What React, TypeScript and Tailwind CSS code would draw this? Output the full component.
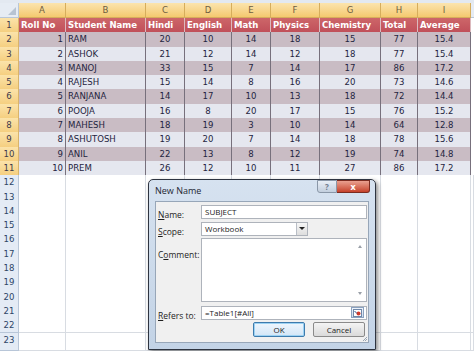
import React from "react";

const COLS = "grid grid-cols-[19px_47px_80px_39px_47px_39px_49px_61px_37px_53px_1fr]";
const LETTERS = ["A", "B", "C", "D", "E", "F", "G", "H", "I"];
const HEAD = ["Roll No", "Student Name", "Hindi", "English", "Math", "Physics", "Chemistry", "Total", "Average"];

const DATA: [number, string, number, number, number, number, number, number, string][] = [
  [1, "RAM", 20, 10, 14, 18, 15, 77, "15.4"],
  [2, "ASHOK", 21, 12, 14, 12, 18, 77, "15.4"],
  [3, "MANOJ", 33, 15, 7, 14, 17, 86, "17.2"],
  [4, "RAJESH", 15, 14, 8, 16, 20, 73, "14.6"],
  [5, "RANJANA", 14, 17, 10, 13, 18, 72, "14.4"],
  [6, "POOJA", 16, 8, 20, 17, 15, 76, "15.2"],
  [7, "MAHESH", 18, 19, 3, 10, 14, 64, "12.8"],
  [8, "ASHUTOSH", 19, 20, 7, 14, 18, 78, "15.6"],
  [9, "ANIL", 22, 13, 8, 12, 19, 74, "14.8"],
  [10, "PREM", 26, 12, 10, 11, 27, 86, "17.2"],
];

const cellFont = { fontFamily: "'DejaVu Sans Condensed', 'DejaVu Sans', sans-serif" };
const uiFont = { fontFamily: "'Open Sans', 'Noto Sans', sans-serif" };

function RowHead({ n, active }: { n?: number; active: boolean }) {
  return (
    <div
      className={`flex items-center justify-center border-r border-b text-[9.5px] ${
        active
          ? "bg-gradient-to-b from-[#fbe3aa] to-[#f5cf80] border-[#d9b46a] text-[#3e3a4a]"
          : "bg-[#e4ebf5] border-[#b8c6d8] text-[#2d4566]"
      }`}
    >
      {n}
    </div>
  );
}

function BlankRow({ n, h }: { n?: number; h: string }) {
  return (
    <div className={`${COLS} ${h}`}>
      <RowHead n={n} active={false} />
      {Array.from({ length: 10 }, (_, j) => (
        <div key={j} className="bg-white border-r border-b border-[#d8dce2]" />
      ))}
    </div>
  );
}

function Sheet() {
  return (
    <div style={cellFont} className="flex h-full flex-col">
      <div className="h-[3px] bg-[#e3e9f1]" />
      <div className={`${COLS} h-[15px]`}>
        <div className="relative bg-[#e6ecf4] border-r border-b border-[#b8c6d8]">
          <div className="absolute right-[2px] bottom-[2px] w-0 h-0 border-l-[8px] border-l-transparent border-b-[8px] border-b-[#b7c3d2]" />
        </div>
        {LETTERS.map((l) => (
          <div
            key={l}
            className="flex items-center justify-center bg-gradient-to-b from-[#fbe4ae] to-[#f4c96e] border-r border-b border-[#d6ad5c] text-[9.5px] text-[#6d5c3f]"
          >
            {l}
          </div>
        ))}
        <div className="bg-[#e6ecf4] border-b border-[#b8c6d8]" />
      </div>

      <div className={`${COLS} h-[14.3px]`}>
        <RowHead n={1} active />
        {HEAD.map((h) => (
          <div
            key={h}
            className="flex items-center px-[2px] bg-gradient-to-b from-[#cd6669] to-[#c0505a] border-r border-[#dcb9bd] border-b border-b-[#8d5058] text-[9.5px] font-bold text-white whitespace-nowrap overflow-hidden"
          >
            {h}
          </div>
        ))}
        <div className="bg-white border-b border-[#dadfe5]" />
      </div>

      {DATA.map((r, i) => {
        const band = i % 2 === 0 ? "bg-[#c9bcc4]" : "bg-[#e5e7ef]";
        const cell = `flex items-center border-r border-b border-[#77707c] text-[9.5px] text-[#1f2440] ${band}`;
        return (
          <div key={r[0]} className={`${COLS} h-[14.3px]`}>
            <RowHead n={i + 2} active />
            <div className={`${cell} justify-end pr-[2px]`}>{r[0]}</div>
            <div className={`${cell} pl-[2px]`}>{r[1]}</div>
            {r.slice(2).map((v, j) => (
              <div key={j} className={`${cell} justify-center`}>
                {v}
              </div>
            ))}
            <div className="bg-white border-b border-[#dadfe5]" />
          </div>
        );
      })}

      {Array.from({ length: 12 }, (_, i) => (
        <BlankRow key={i} n={i + 12} h="h-[14.3px]" />
      ))}
      <BlankRow h="flex-1" />
    </div>
  );
}

function Label({ pre, u, post }: { pre?: string; u: string; post: string }) {
  return (
    <span className="text-[8.5px] text-[#1e1e1e] whitespace-nowrap">
      {pre}
      <span className="underline">{u}</span>
      {post}
    </span>
  );
}

function Dialog() {
  return (
    <div
      style={uiFont}
      className="absolute left-[148px] top-[179px] w-[228px] h-[171px] rounded-t-[5px] border border-[#2e3440] bg-gradient-to-b from-[#d6e2f0] to-[#c3d3e6] shadow-[2px_2px_4px_rgba(0,0,0,0.45)]"
    >
      <div className="flex h-[21px] items-start">
        <span className="ml-[6px] mt-[4px] text-[9px] text-[#1d2633]">New Name</span>
        <div className="ml-auto mr-[5px] flex">
          <div className="flex h-[13px] w-[20px] items-center justify-center rounded-bl-[3px] border border-[#8a97a8] bg-gradient-to-b from-[#e8eef6] to-[#c3cfde] text-[8px] font-bold text-[#6d7a8c]">
            ?
          </div>
          <div className="flex h-[13px] w-[33px] items-center justify-center rounded-br-[3px] border border-l-0 border-[#7a2b20] bg-gradient-to-b from-[#e9a090] to-[#c5402a] text-[9px] font-bold text-white">
            x
          </div>
        </div>
      </div>

      <div className="relative mx-[6px] h-[142px] border border-[#97a6b8] bg-[#f0f0f0]">
        <div className="flex h-[17px] items-center pt-[2px]">
          <div className="w-[45px] pl-[2px]">
            <Label u="N" post="ame:" />
          </div>
          <div className="flex h-[14px] w-[166px] items-center border border-[#aeb3bb] bg-white px-[3px] text-[8px] text-[#222]">
            SUBJECT
          </div>
        </div>
        <div className="mt-[1px] flex h-[17px] items-center">
          <div className="w-[45px] pl-[2px]">
            <Label u="S" post="cope:" />
          </div>
          <div className="flex h-[14px] w-[107px] items-center border border-[#aeb3bb] bg-white pl-[3px] text-[8px] text-[#222]">
            <span className="flex-1">Workbook</span>
            <div className="flex h-[12px] w-[11px] items-center justify-center border-l border-[#b9bec6] bg-gradient-to-b from-[#f6f6f6] to-[#dedede]">
              <div className="h-0 w-0 border-x-[3px] border-t-[3px] border-x-transparent border-t-[#222]" />
            </div>
          </div>
        </div>
        <div className="mt-[1px] flex">
          <div className="w-[45px] pl-[2px] pt-[2px]">
            <Label pre="C" u="o" post="mment:" />
          </div>
          <div className="relative h-[64px] w-[166px] border border-[#aeb3bb] bg-white">
            <div className="absolute right-[4px] top-[6px] h-0 w-0 border-x-[2.5px] border-b-[3px] border-x-transparent border-b-[#9aa0a8]" />
            <div className="absolute right-[4px] bottom-[6px] h-0 w-0 border-x-[2.5px] border-t-[3px] border-x-transparent border-t-[#9aa0a8]" />
          </div>
        </div>
        <div className="mt-[3px] flex h-[15px] items-center">
          <div className="w-[45px] pl-[2px]">
            <Label u="R" post="efers to:" />
          </div>
          <div className="flex h-[14px] w-[166px] items-center border border-[#aeb3bb] bg-white pl-[3px] text-[8px] text-[#222]">
            <span className="flex-1">=Table1[#All]</span>
            <div className="mr-[2px] flex h-[11px] w-[13px] items-center justify-center border border-[#8aa2c0] bg-gradient-to-b from-[#eef4fb] to-[#cfdcec]">
              <svg width="9" height="8" viewBox="0 0 9 8">
                <rect x="0.5" y="0.5" width="8" height="7" fill="#fff" stroke="#6f87a8" />
                <circle cx="5.5" cy="4.5" r="2" fill="#d23a2a" />
                <path d="M1.5 2 L4 4.5" stroke="#2a4f8a" strokeWidth="1" />
              </svg>
            </div>
          </div>
        </div>
        <div className="mt-[2px] flex justify-end gap-[8px] pr-[3px]">
          <div className="flex h-[15px] w-[52px] items-center justify-center rounded-[2px] border border-[#3d7bad] bg-gradient-to-b from-[#eef6fd] to-[#d3e6f7] text-[8px] text-[#222] shadow-[inset_0_0_0_1px_#9cd2f3]">
            OK
          </div>
          <div className="flex h-[15px] w-[52px] items-center justify-center rounded-[2px] border border-[#8a8a8a] bg-gradient-to-b from-[#f4f4f4] to-[#dadada] text-[8px] text-[#222]">
            Cancel
          </div>
        </div>
        <svg className="absolute right-[0px] bottom-[0px]" width="6" height="6" viewBox="0 0 6 6">
          <path d="M5 1 L1 5 M5 3 L3 5" stroke="#9aa6b4" strokeWidth="1" />
        </svg>
      </div>
    </div>
  );
}

export default function App() {
  return (
    <div className="relative h-[351px] w-[474px] overflow-hidden bg-white">
      <Sheet />
      <Dialog />
    </div>
  );
}
